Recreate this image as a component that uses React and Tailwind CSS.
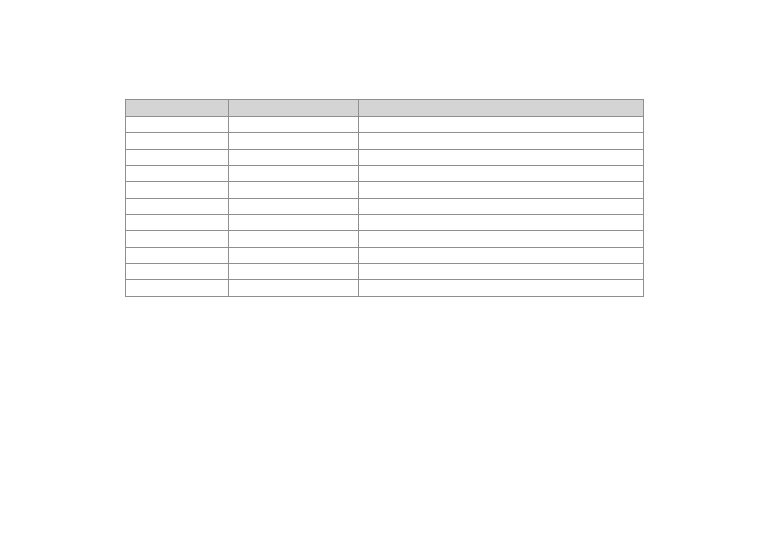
export default function App() {
  const rows = Array.from({ length: 11 });
  return (
    <div className="w-[768px] h-[543px] bg-white pt-[99px]" style={{ fontFamily: '"Liberation Sans", Arial, sans-serif' }}>
      <table className="mx-auto w-[519px] border-collapse table-fixed">
        <colgroup>
          <col className="w-[103px]" />
          <col className="w-[130px]" />
          <col />
        </colgroup>
        <thead>
          <tr className="h-[17px] bg-[#d4d4d4]">
            <th className="border border-[#8f8f8f] p-0"></th>
            <th className="border border-[#8f8f8f] p-0"></th>
            <th className="border border-[#8f8f8f] p-0"></th>
          </tr>
        </thead>
        <tbody>
          {rows.map((_, i) => (
            <tr key={i} className="h-[16.35px]">
              <td className="border border-[#8f8f8f] p-0"></td>
              <td className="border border-[#8f8f8f] p-0"></td>
              <td className="border border-[#8f8f8f] p-0"></td>
            </tr>
          ))}
        </tbody>
      </table>
    </div>
  );
}
